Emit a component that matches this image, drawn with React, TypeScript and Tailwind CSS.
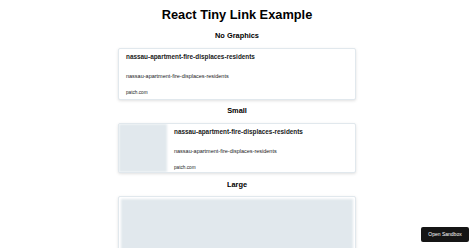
import React from "react";

function CardText() {
  return (
    <div className="flex flex-col pt-[4px] pl-[7px] min-w-0">
      <div className="text-[6.4px] leading-[8px] font-bold text-[#181919] whitespace-nowrap">
        nassau-apartment-fire-displaces-residents
      </div>
      <div className="mt-[11px] text-[5.5px] leading-[8px] text-[#181919] whitespace-nowrap">
        nassau-apartment-fire-displaces-residents
      </div>
      <div className="mt-[9px] text-[4.7px] leading-[8px] text-[#181919] whitespace-nowrap">
        patch.com
      </div>
    </div>
  );
}

export default function App() {
  return (
    <div className="relative w-[474px] h-[248px] overflow-hidden bg-white font-['Liberation_Sans',Arial,sans-serif] text-black">
      <div className="flex flex-col items-center">
        <h1 className="mt-[7px] text-[12.8px] leading-[16px] font-bold">React Tiny Link Example</h1>
        <h3 className="mt-[8px] text-[7.4px] leading-[10px] font-bold">No Graphics</h3>
        <div className="mt-[7px] w-[238px] h-[52px] bg-white border border-[#e1e8ed] rounded-[2px] shadow-[0_1px_3px_rgba(0,0,0,0.12)]">
          <CardText />
        </div>
        <h3 className="mt-[6px] text-[7.4px] leading-[10px] font-bold">Small</h3>
        <div className="mt-[7px] w-[238px] h-[50px] flex bg-white border border-[#e1e8ed] rounded-[2px] shadow-[0_1px_3px_rgba(0,0,0,0.12)] overflow-hidden">
          <div className="w-[48px] shrink-0 bg-[#e1e8ed] blur-[1px]" />
          <CardText />
        </div>
        <h3 className="mt-[7px] text-[7.4px] leading-[10px] font-bold">Large</h3>
        <div className="mt-[6px] w-[238px] h-[80px] flex flex-col bg-white border border-[#e1e8ed] rounded-[2px] shadow-[0_1px_3px_rgba(0,0,0,0.12)] p-[2px]">
          <div className="h-[70px] bg-[#e1e8ed] blur-[1px]" />
        </div>
      </div>
      <div className="absolute left-[421px] top-[227px] w-[48px] h-[15px] bg-[#151515] rounded-[2px] flex items-center justify-center text-white text-[5px]">
        Open Sandbox
      </div>
    </div>
  );
}
